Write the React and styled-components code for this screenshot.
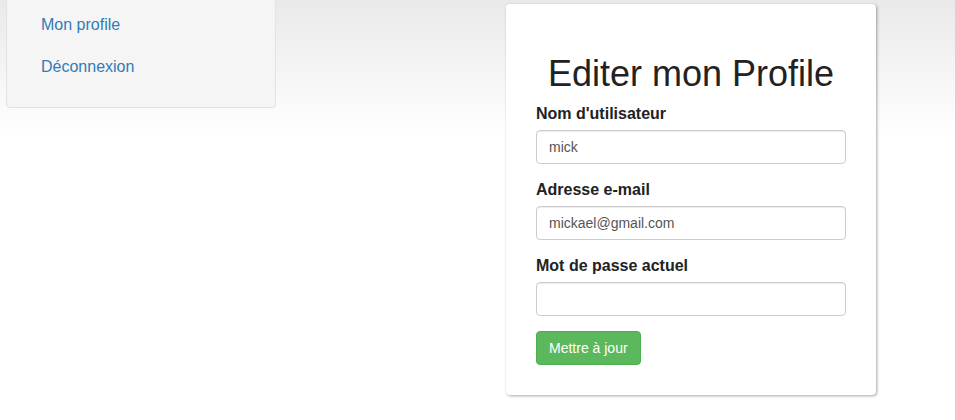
import React from 'react'
import styled, { createGlobalStyle } from 'styled-components'

const GlobalStyle = createGlobalStyle`
  html, body {
    margin: 0;
    padding: 0;
  }
  body {
    font-family: "Liberation Sans", Arial, sans-serif;
    font-size: 14px;
    color: #333;
    background: linear-gradient(to bottom, #e9e9e9 0, #ffffff 135px) no-repeat;
    background-color: #fff;
    min-height: 420px;
  }
`

const Page = styled.div`
  display: flex;
  align-items: flex-start;
  padding-left: 6px;
  margin-top: -16px;
`

const Well = styled.div`
  width: 230px;
  padding: 19px;
  background: #f5f5f5;
  border: 1px solid #e3e3e3;
  border-radius: 4px;
  box-shadow: inset 0 1px 1px rgba(0, 0, 0, 0.05);
`

const NavList = styled.ul`
  list-style: none;
  margin: 0;
  padding: 0;
`

const NavLink = styled.a`
  display: block;
  padding: 10px 15px;
  font-size: 16px;
  line-height: 22px;
  color: #337ab7;
  text-decoration: none;
`

const Card = styled.div`
  width: 310px;
  margin-top: 20px;
  margin-left: 230px;
  padding: 30px;
  background: #fff;
  border-radius: 4px;
  box-shadow: 1px 1px 3px rgba(0, 0, 0, 0.35);
`

const Title = styled.h1`
  margin: 20px 0 9px;
  font-size: 36px;
  font-weight: 400;
  line-height: 1.1;
  text-align: center;
  color: #222;
`

const Group = styled.div`
  margin-bottom: ${p => (p.$last ? 0 : 15)}px;
`

const Label = styled.label`
  display: block;
  margin-bottom: 5px;
  font-size: 16px;
  font-weight: 700;
  line-height: 22px;
  color: #222;
`

const Input = styled.input`
  display: block;
  box-sizing: border-box;
  width: 100%;
  height: 34px;
  padding: 6px 12px;
  font-family: inherit;
  font-size: 14px;
  color: #555;
  background: #fff;
  border: 1px solid #ccc;
  border-radius: 4px;
  box-shadow: inset 0 1px 1px rgba(0, 0, 0, 0.075);
`

const Button = styled.button`
  display: block;
  height: 34px;
  margin-top: 15px;
  padding: 6px 12px;
  font-family: inherit;
  font-size: 14px;
  color: #fff;
  background: #5cb85c;
  border: 1px solid #4cae4c;
  border-radius: 4px;
`

export default function App() {
  return (
    <>
      <GlobalStyle />
      <Page>
        <Well>
          <NavList>
            <li><NavLink href="#">Mon profile</NavLink></li>
            <li><NavLink href="#">Déconnexion</NavLink></li>
          </NavList>
        </Well>
        <Card>
          <Title>Editer mon Profile</Title>
          <Group>
            <Label>Nom d'utilisateur</Label>
            <Input defaultValue="mick" />
          </Group>
          <Group>
            <Label>Adresse e-mail</Label>
            <Input defaultValue="mickael@gmail.com" />
          </Group>
          <Group $last>
            <Label>Mot de passe actuel</Label>
            <Input type="password" />
          </Group>
          <Button>Mettre à jour</Button>
        </Card>
      </Page>
    </>
  )
}
